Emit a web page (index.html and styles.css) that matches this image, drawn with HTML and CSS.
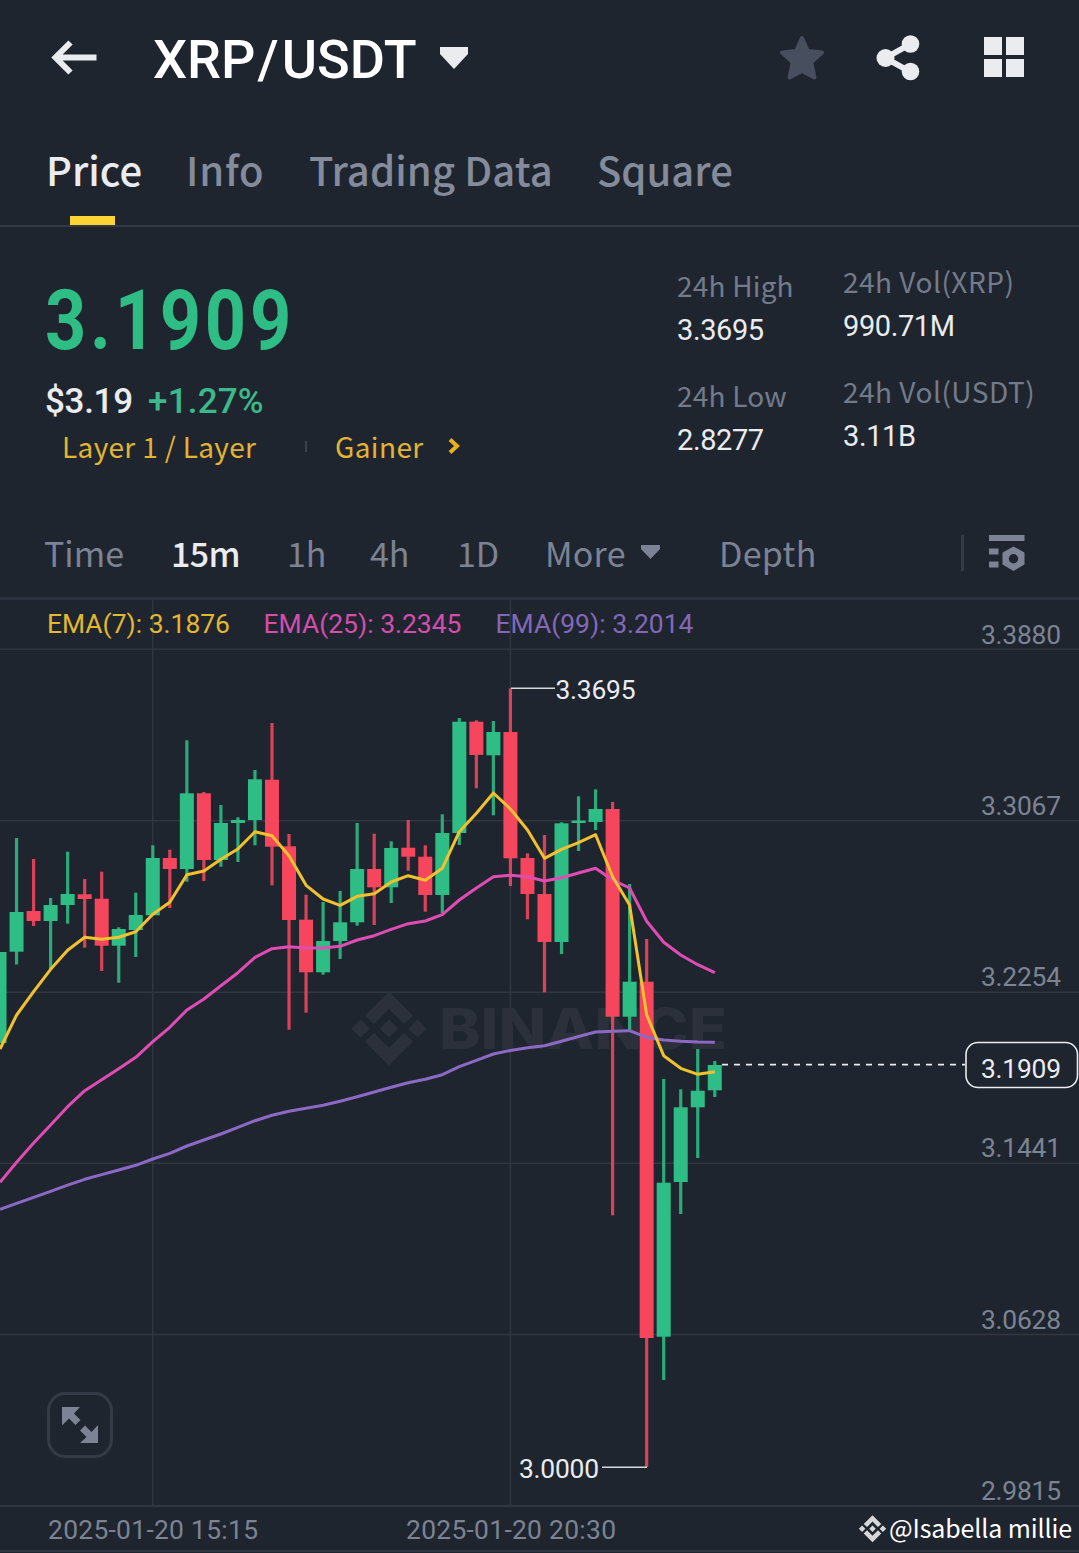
FILE: index.html
```html
<!DOCTYPE html>
<html lang="en">
<head>
<meta charset="utf-8">
<title>XRP/USDT</title>
<link rel="stylesheet" href="styles.css">
</head>
<body>
<header class="topbar">
  <svg class="icon-back" viewBox="0 0 46 36" width="46" height="36"><path d="M45.500 17.500H6M19.500 2.500L4.500 17.500L19.500 32.500" fill="none" stroke="#eaecef" stroke-width="6"/></svg>
  <h1 class="pair">XRP<span class="slash">/</span>USDT</h1>
  <svg class="icon-caret" viewBox="0 0 28 22" width="28" height="22"><path d="M0 0H28V7L14 22L0 7Z" fill="#eaecef"/></svg>
  <div class="actions">
    <svg viewBox="0 0 46 46" width="46" height="46"><path d="M23 3L28.8 16L43 17.500L32.300 27.200L35.400 42.500L23 36L10.600 42.500L13.700 27.200L3 17.500L17.200 16Z" fill="#474f5e" stroke="#474f5e" stroke-width="4" stroke-linejoin="round"/></svg>
    <svg viewBox="0 0 44 46" width="44" height="46"><path d="M34.500 9L9.500 23L34.500 37" fill="none" stroke="#eaecef" stroke-width="6"/><circle cx="34.500" cy="9" r="8.800" fill="#eaecef"/><circle cx="9.500" cy="23" r="9" fill="#eaecef"/><circle cx="34.500" cy="36.500" r="8.800" fill="#eaecef"/></svg>
    <svg class="icon-grid" viewBox="0 0 40 40" width="40" height="40"><path d="M0 0H18V18H0ZM22 0H40V18H22ZM0 22H18V40H0ZM22 22H40V40H22Z" fill="#eaecef"/></svg>
  </div>
</header>

<nav class="tabs">
  <span class="tab tab-price active">Price</span>
  <span class="tab tab-info">Info</span>
  <span class="tab tab-data">Trading Data</span>
  <span class="tab tab-square">Square</span>
</nav>

<section class="quote">
  <div class="quote-main">
    <div class="last">3.1909</div>
    <div class="sub"><span class="fiat">$3.19</span><span class="change">+1.27%</span></div>
    <div class="tags">
      <span class="tag-layer">Layer 1 / Layer</span>
      <i class="tag-sep"></i>
      <span class="tag-gainer">Gainer</span>
      <svg viewBox="0 0 12 16" width="12" height="16"><path d="M2 1.500L9 8L2 14.500" fill="none" stroke="#e9b21a" stroke-width="4"/></svg>
    </div>
  </div>
  <dl class="stats stats-a">
    <dt class="t-high">24h High</dt><dd>3.3695</dd>
    <dt class="t-low">24h Low</dt><dd>2.8277</dd>
  </dl>
  <dl class="stats stats-b">
    <dt class="t-vx">24h Vol(XRP)</dt><dd>990.71M</dd>
    <dt class="t-vu">24h Vol(USDT)</dt><dd>3.11B</dd>
  </dl>
</section>

<nav class="frames">
  <span class="frame f-time">Time</span>
  <span class="frame f-15m active">15m</span>
  <span class="frame f-1h">1h</span>
  <span class="frame f-4h">4h</span>
  <span class="frame f-1d">1D</span>
  <span class="frame f-more">More</span>
  <svg class="more-caret" viewBox="0 0 19 14" width="19" height="14"><path d="M0 0H19V4L9.500 14L0 4Z" fill="#7b8394"/></svg>
  <span class="frame f-depth">Depth</span>
  <div class="frame-tools">
    <i class="tool-sep"></i>
    <svg viewBox="0 0 36 37" width="36" height="37"><path d="M0 1H35.500V7H0ZM0 14.500H9.500V20.500H0ZM0 27.500H9.500V33.500H0Z" fill="#7b8394"/><path fill-rule="evenodd" d="M24.500 12.500L35.500 18.500V30.500L24.500 37L13.500 30.500V18.500ZM24.500 20A4.700 4.700 0 1 0 24.500 29.400A4.700 4.700 0 1 0 24.500 20Z" fill="#7b8394"/></svg>
  </div>
</nav>

<main class="chart">
<svg class="plot" viewBox="0 600 1079 953" width="1079" height="953">
  <defs>
    <g id="mark">
      <path d="M0 -37L24 -13L15 -4.500L0 -19.500L-15 -4.500L-24 -13Z"/>
      <path d="M0 37L24 13L15 4.500L0 19.500L-15 4.500L-24 13Z"/>
      <path d="M0 -9L9 0L0 9L-9 0ZM28.500 -9L37.500 0L28.500 9L19.500 0ZM-28.500 -9L-19.500 0L-28.500 9L-37.500 0Z"/>
    </g>
  </defs>
  <path class="grid" d="M152.700 600V1505M510.400 600V1505M0 649.300H1079M0 820.800H1079M0 992.200H1079M0 1163.300H1079M0 1334.500H1079"/>
  <path class="axis" d="M0 1506H1079M0 1551H1079"/>
  <g class="watermark">
    <use href="#mark" x="389" y="1028.500"/>
    <text x="439" y="1048.800" textLength="288" lengthAdjust="spacingAndGlyphs">BINANCE</text>
  </g>
  <g id="candles"></g>
  <g id="averages"></g>
  <path class="leader" d="M511 688.300H555M602 1467.300H647"/>
  <path class="last-line" d="M722 1064.700H965"/>
  <rect class="last-box" x="966" y="1042.500" width="111.500" height="45" rx="12"/>
  <g class="legend">
    <text class="ema7" x="47" y="632.700" textLength="183" lengthAdjust="spacingAndGlyphs">EMA(7): 3.1876</text>
    <text class="ema25" x="263.500" y="632.700" textLength="198" lengthAdjust="spacingAndGlyphs">EMA(25): 3.2345</text>
    <text class="ema99" x="495.500" y="632.700" textLength="198" lengthAdjust="spacingAndGlyphs">EMA(99): 3.2014</text>
  </g>
  <g class="scale">
    <text x="981" y="644" textLength="80">3.3880</text>
    <text x="981" y="815" textLength="80">3.3067</text>
    <text x="981" y="986" textLength="80">3.2254</text>
    <text x="981" y="1157" textLength="80">3.1441</text>
    <text x="981" y="1329" textLength="80">3.0628</text>
    <text x="981" y="1500" textLength="80">2.9815</text>
    <text x="48" y="1539" textLength="210">2025-01-20 15:15</text>
    <text x="406" y="1539" textLength="210">2025-01-20 20:30</text>
  </g>
  <g class="marks">
    <text x="555.500" y="699" textLength="80">3.3695</text>
    <text x="519" y="1478" textLength="80">3.0000</text>
    <text x="981" y="1078" textLength="80">3.1909</text>
  </g>
  <g class="fullscreen">
    <rect x="48.500" y="1393.500" width="63" height="63" rx="17"/>
    <path d="M62 1407H80L74 1413.500L80.500 1420L75.500 1425L69 1418.500L62 1425.500ZM98 1443H80L86.500 1437L80 1430.500L85 1425.500L91.500 1432L98 1425Z"/>
  </g>
  <g class="credit">
    <use href="#mark" transform="translate(872.500 1528.700) scale(.365)"/>
    <text x="889" y="1538" textLength="183">@Isabella millie</text>
  </g>
</svg>
</main>
<script src="chart.js"></script>
</body>
</html>
```
FILE: styles.css
```css
* { box-sizing: border-box; }
body {
  margin: 0;
  width: 1079px;
  height: 1553px;
  overflow: hidden;
  background: #1f252f;
  color: #eaecef;
  font-family: "Noto Sans CJK SC", "Noto Sans", sans-serif;
}
svg { display: block; flex: none; }

.topbar { display: flex; align-items: center; height: 119px; padding: 0 55px 0 51px; }
.icon-back { margin-bottom: 3px; }
.pair {
  width: 287px;
  margin: 0 0 0 56px;
  color: #fff;
  font: 500 54px/60px Roboto, sans-serif;
  white-space: nowrap;
}
.slash { margin: 0 3px 0 2px; }
.icon-caret { margin-bottom: 4px; }
.actions { display: flex; align-items: center; margin: 0 0 4px auto; }
.actions svg + svg { margin-left: 51px; }
.actions svg + svg + svg { margin-left: 64px; }
.actions .icon-grid { margin-bottom: 2px; }

.tabs {
  display: flex;
  height: 108px;
  padding-left: 46px;
  border-bottom: 2px solid #323945;
  color: #848b9b;
  font-size: 40px;
  font-weight: 500;
  line-height: 101px;
  white-space: nowrap;
}
.tab-price { width: 140px; }
.tab-info { width: 123px; letter-spacing: 0.8px; }
.tab-data { width: 288px; letter-spacing: 0.1px; }
.tab.active { color: #eaecef; }
.tab.active::after {
  content: "";
  display: block;
  width: 45px;
  height: 9px;
  margin: -4px 0 0 24px;
  background: #fcd535;
}

.quote { display: flex; height: 281px; }
.quote-main { width: 677px; padding: 46px 0 0 45px; white-space: nowrap; }
.last {
  color: #2ebd85;
  font: 700 84px/96px Roboto, sans-serif;
  letter-spacing: 4.4px;
  transform: scaleX(.857);
  transform-origin: 0 50%;
}
.sub { display: flex; font: 500 35px/65px Roboto, sans-serif; height: 64px; }
.fiat { width: 103px; letter-spacing: -0.3px; }
.change { color: #3bb98a; letter-spacing: 0.2px; }
.tags { display: flex; align-items: center; padding-left: 17px; color: #e3b433; font-size: 28px; line-height: 26px; }
.tag-layer { width: 243px; letter-spacing: 0.35px; }
.tag-sep { width: 2px; height: 11px; margin-right: 28px; background: #39414e; }
.tag-gainer { width: 113px; letter-spacing: 0.4px; }

.stats { margin: 0; white-space: nowrap; }
.stats-a { width: 166px; padding-top: 36px; }
.stats-b { padding-top: 32px; }
.stats dt { color: #737b8b; font-size: 28px; line-height: 44px; letter-spacing: 0.2px; }
.stats-b dt { letter-spacing: 0.5px; }
.stats dd { margin: 0 0 20px; font: 400 29px/46px Roboto, sans-serif; letter-spacing: -0.4px; }

.frames {
  display: flex;
  align-items: center;
  height: 92px;
  padding-left: 44px;
  border-bottom: 3px solid #2b323d;
  color: #7b8394;
  font-size: 34px;
  line-height: 88px;
  white-space: nowrap;
}
.frame.active { color: #eaecef; font-weight: 500; }
.f-time { width: 127px; }
.f-15m { width: 116px; letter-spacing: -0.6px; }
.f-1h { width: 83px; }
.f-4h { width: 87px; }
.f-1d { width: 88px; }
.f-more { width: 96px; letter-spacing: 0.2px; }
.more-caret { margin: 0 59px 2px 0; }
.f-depth { letter-spacing: 0.3px; }
.frame-tools { display: flex; align-items: center; margin: 0 54px 0 auto; }
.tool-sep { width: 3px; height: 36px; margin-right: 25px; background: #343b47; }

.chart text { font-family: Roboto, sans-serif; font-size: 26.400px; }
.grid, .axis { fill: none; stroke: #303741; stroke-width: 1.500; }
.axis { stroke-width: 2; }
.watermark { fill: #2b303b; }
.chart .watermark text { font-family: Inter, sans-serif; font-size: 56px; font-weight: 800; }
.up { fill: #2ebd85; }
.down { fill: #f6465d; }
.wick { opacity: .88; }
.ema7, .ema25, .ema99 { stroke: none; }
.ema7 { fill: #e3b82f; }
.ema25 { fill: #d54dad; }
.ema99 { fill: #8468b8; }
.line { fill: none; stroke-width: 3; stroke-linejoin: round; }
.line7 { stroke: #f2c12e; }
.line25 { stroke: #df4cb4; }
.line99 { stroke: #8c69c4; }
.leader { stroke: #d5d8dd; stroke-width: 1.600; }
.last-line { stroke: #eaecef; stroke-width: 1.800; stroke-dasharray: 6 6; }
.last-box { fill: #1f252f; stroke: #eaecef; stroke-width: 1.600; }
.scale { fill: #7c8493; }
.marks { fill: #eaecef; }
.fullscreen rect { fill: none; stroke: #343b47; stroke-width: 3; }
.fullscreen path { fill: #7b8394; }
.credit { fill: #d6d7d9; }
.chart .credit text { fill: #fff; font-family: "Noto Sans CJK SC", sans-serif; font-size: 25px; font-weight: 400; }
```
FILE: chart.js
```js
const NS = "http://www.w3.org/2000/svg";
const xAt = i => 16.55 + 17.03 * i;

// [direction, wick top, wick bottom, body top, body bottom]; the first candle is cut by the left edge
const candles = [
  ["u", 952, 1043, 952, 1043],
  ["u", 838, 964.5, 912, 951.7], ["d", 859, 926, 911, 921], ["u", 898, 970, 905, 921],
  ["u", 851.7, 923.7, 894, 905], ["d", 879, 947.7, 894.3, 899], ["d", 871.7, 971, 898.7, 945.7],
  ["u", 927.3, 982.7, 929, 945.7], ["u", 892.7, 957, 915, 930], ["u", 845.3, 915, 858, 915.3],
  ["d", 849.7, 908, 858, 869], ["u", 740.3, 881.7, 793.3, 869], ["d", 792, 881, 793.3, 860],
  ["u", 805, 866.7, 823, 860], ["u", 817.3, 862, 820, 823], ["u", 770, 845.3, 779.3, 820],
  ["d", 723, 885.3, 779.7, 846.7], ["d", 834, 1029.7, 846.3, 920], ["d", 894.7, 1012.7, 919.7, 972.3],
  ["u", 902, 974.7, 941, 972.3], ["u", 891, 959, 922.3, 941], ["u", 823, 925.7, 869, 922.3],
  ["d", 833.7, 925, 869, 887.3], ["u", 841.3, 903, 848, 887.3], ["d", 820, 870.7, 847.7, 856.7],
  ["d", 845.3, 911.7, 856.7, 895], ["u", 814.3, 913, 833, 895], ["u", 718, 845, 721.7, 833],
  ["d", 720.3, 788.3, 721.7, 755], ["u", 721, 815.3, 732, 755.3], ["d", 688.3, 886, 732, 858.3],
  ["d", 853.3, 919.3, 858, 894], ["d", 835, 992.3, 894, 942], ["u", 822.3, 954, 823.3, 942],
  ["u", 796.3, 851, 820.5, 823], ["u", 789.3, 830, 809, 822], ["d", 802, 1215.3, 809, 1016.7],
  ["u", 884, 1030, 981.7, 1016.7], ["d", 939, 1467, 981.7, 1338], ["u", 1079, 1380, 1182.7, 1336.7],
  ["u", 1089.3, 1214, 1107.3, 1182], ["u", 1049, 1158, 1090.7, 1107.3], ["u", 1061, 1097, 1065, 1090.3]
];

// One value per candle, starting at the left edge of the plot
const ema7 = [1049, 1015, 991.7, 969.3, 950.3, 937.3, 939.3, 937.3, 931.7, 914.3, 902.3, 874.7, 871, 859.3,
  849, 831.7, 835.7, 855.7, 885.3, 899, 905.3, 896.3, 893.7, 882, 875.7, 880.3, 868.3, 831.7, 813.3, 793,
  809, 830, 858.3, 849.3, 842.7, 834.7, 876.7, 905, 1015, 1055.7, 1068.3, 1074.3, 1071.7];
const ema25 = [1182.3, 1162.3, 1143, 1125, 1106.7, 1090.7, 1079.7, 1068.7, 1057.3, 1041.7, 1027.3, 1010, 999,
  985.7, 972.7, 957.3, 948.7, 946.7, 948, 948, 946.3, 940, 935.7, 929.3, 923.7, 921, 914.7, 900, 888, 876.7,
  875.3, 876.7, 881, 877.7, 873, 868.3, 880, 888, 921.3, 942.3, 955, 964.7, 972.7];
const ema99 = [1209.3, 1203.3, 1197.3, 1191.3, 1185.2, 1179.3, 1174.6, 1170, 1165.3, 1159, 1153.3, 1146, 1140,
  1134, 1127.3, 1120.7, 1115.3, 1111.3, 1108.3, 1105.3, 1101.2, 1096.7, 1092, 1087.3, 1082.7, 1079.3, 1074.7,
  1066.7, 1060.3, 1054, 1050.5, 1047.7, 1045.7, 1041.3, 1036.5, 1032, 1031.3, 1030.7, 1037.3, 1040, 1041.2,
  1042, 1042.3];

function add(parent, name, attrs) {
  const el = document.createElementNS(NS, name);
  for (const key in attrs) el.setAttribute(key, attrs[key]);
  parent.appendChild(el);
}

const candleLayer = document.getElementById("candles");
candles.forEach(([dir, high, low, top, bottom], n) => {
  const x = xAt(n - 1);
  const tone = dir === "u" ? "up" : "down";
  add(candleLayer, "rect", { class: tone + " wick", x: x - 1.6, y: high, width: 3.2, height: low - high });
  add(candleLayer, "rect", { class: tone, x: x - 7, y: top, width: 14, height: bottom - top });
});

const lineLayer = document.getElementById("averages");
[["line99", ema99], ["line25", ema25], ["line7", ema7]].forEach(([name, values]) => {
  const points = values.map((y, n) => (n ? xAt(n - 1).toFixed(1) : 0) + "," + y).join(" ");
  add(lineLayer, "polyline", { class: "line " + name, points });
});
```
